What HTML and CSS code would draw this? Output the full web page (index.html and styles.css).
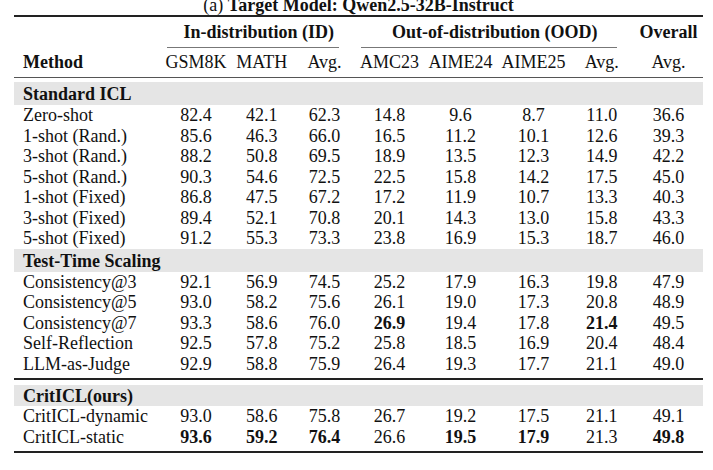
FILE: index.html
```html
<!DOCTYPE html>
<html lang="en">
  <head>
    <meta charset="UTF-8" />
    <meta name="viewport" content="width=device-width, initial-scale=1.0" />
    <title>CritICL Results - Qwen2.5-32B-Instruct</title>
    <link rel="stylesheet" href="styles.css">
  </head>
  <body>
    <main class="page">
      <div class="caption">(a) <b>Target Model: Qwen2.5-32B-Instruct</b></div>
      <table class="results">
        <colgroup>
          <col class="c-method">
          <col class="c-gsm">
          <col class="c-math">
          <col class="c-avg-id">
          <col class="c-amc">
          <col class="c-aime24">
          <col class="c-aime25">
          <col class="c-avg-ood">
          <col class="c-overall">
        </colgroup>
        <thead>
          <tr class="group-row">
            <th></th>
            <th colspan="3"><div class="cmid">In-distribution (ID)</div></th>
            <th colspan="4"><div class="cmid">Out-of-distribution (OOD)</div></th>
            <th><div class="nocmid">Overall</div></th>
          </tr>
          <tr class="sub-row">
            <th class="method">Method</th>
            <th>GSM8K</th>
            <th>MATH</th>
            <th>Avg.</th>
            <th>AMC23</th>
            <th>AIME24</th>
            <th>AIME25</th>
            <th>Avg.</th>
            <th>Avg.</th>
          </tr>
        </thead>
        <tbody>
          <tr class="gap"><td colspan="9"></td></tr>
          <tr class="section"><td colspan="9">Standard ICL</td></tr>
          <tr><td>Zero-shot</td><td>82.4</td><td>42.1</td><td>62.3</td><td>14.8</td><td>9.6</td><td>8.7</td><td>11.0</td><td>36.6</td></tr>
          <tr><td>1-shot (Rand.)</td><td>85.6</td><td>46.3</td><td>66.0</td><td>16.5</td><td>11.2</td><td>10.1</td><td>12.6</td><td>39.3</td></tr>
          <tr><td>3-shot (Rand.)</td><td>88.2</td><td>50.8</td><td>69.5</td><td>18.9</td><td>13.5</td><td>12.3</td><td>14.9</td><td>42.2</td></tr>
          <tr><td>5-shot (Rand.)</td><td>90.3</td><td>54.6</td><td>72.5</td><td>22.5</td><td>15.8</td><td>14.2</td><td>17.5</td><td>45.0</td></tr>
          <tr><td>1-shot (Fixed)</td><td>86.8</td><td>47.5</td><td>67.2</td><td>17.2</td><td>11.9</td><td>10.7</td><td>13.3</td><td>40.3</td></tr>
          <tr><td>3-shot (Fixed)</td><td>89.4</td><td>52.1</td><td>70.8</td><td>20.1</td><td>14.3</td><td>13.0</td><td>15.8</td><td>43.3</td></tr>
          <tr><td>5-shot (Fixed)</td><td>91.2</td><td>55.3</td><td>73.3</td><td>23.8</td><td>16.9</td><td>15.3</td><td>18.7</td><td>46.0</td></tr>
          <tr class="section"><td colspan="9">Test-Time Scaling</td></tr>
          <tr><td>Consistency@3</td><td>92.1</td><td>56.9</td><td>74.5</td><td>25.2</td><td>17.9</td><td>16.3</td><td>19.8</td><td>47.9</td></tr>
          <tr><td>Consistency@5</td><td>93.0</td><td>58.2</td><td>75.6</td><td>26.1</td><td>19.0</td><td>17.3</td><td>20.8</td><td>48.9</td></tr>
          <tr><td>Consistency@7</td><td>93.3</td><td>58.6</td><td>76.0</td><td class="best">26.9</td><td>19.4</td><td>17.8</td><td class="best">21.4</td><td>49.5</td></tr>
          <tr><td>Self-Reflection</td><td>92.5</td><td>57.8</td><td>75.2</td><td>25.8</td><td>18.5</td><td>16.9</td><td>20.4</td><td>48.4</td></tr>
          <tr><td>LLM-as-Judge</td><td>92.9</td><td>58.8</td><td>75.9</td><td>26.4</td><td>19.3</td><td>17.7</td><td>21.1</td><td>49.0</td></tr>
          <tr class="gap-above"><td colspan="9"></td></tr>
          <tr class="gap-below"><td colspan="9"></td></tr>
          <tr class="section ours"><td colspan="9">CritICL(ours)</td></tr>
          <tr><td>CritICL-dynamic</td><td>93.0</td><td>58.6</td><td>75.8</td><td>26.7</td><td>19.2</td><td>17.5</td><td>21.1</td><td>49.1</td></tr>
          <tr><td>CritICL-static</td><td class="best">93.6</td><td class="best">59.2</td><td class="best">76.4</td><td>26.6</td><td class="best">19.5</td><td class="best">17.9</td><td>21.3</td><td class="best">49.8</td></tr>
          <tr class="gap-end"><td colspan="9"></td></tr>
        </tbody>
      </table>
    </main>
  </body>
</html>
```

FILE: styles.css
```css
* {
  margin: 0;
  padding: 0;
  box-sizing: border-box;
}

body {
  background: #fff;
  color: #111;
  font-family: "Liberation Serif", "Times New Roman", serif;
  font-size: 18px;
}

.page {
  width: 713px;
  padding: 0 10px 0 14px;
}

.caption {
  height: 15px;
  line-height: 10px;
  text-align: center;
}

.results {
  width: 689px;
  table-layout: fixed;
  border-collapse: separate;
  border-spacing: 0;
  border-top: 2px solid #222;
  border-bottom: 2px solid #222;
}

.c-method { width: 148px; }
.c-gsm { width: 68px; }
.c-math { width: 63.5px; }
.c-avg-id { width: 62px; }
.c-amc { width: 68px; }
.c-aime24 { width: 74px; }
.c-aime25 { width: 72px; }
.c-avg-ood { width: 64.5px; }
.c-overall { width: 69px; }

th, td {
  padding: 0;
  text-align: center;
  white-space: nowrap;
  font-weight: normal;
}

/* group headers + cmidrules */
.group-row th {
  padding-top: 7px;
  font-weight: bold;
  line-height: 17px;
}

.cmid {
  margin: 0 17px 0 5px;
  padding: 0 0 6px;
  border-bottom: 1px solid #777;
  text-indent: 12px;
}

.nocmid {
  padding-bottom: 7px;
}

.sub-row th {
  padding: 6px 0 6px;
  line-height: 17px;
  border-bottom: 1px solid #555;
}

.sub-row th.method {
  font-weight: bold;
  text-align: left;
  padding-left: 9px;
}

/* body rows */
tbody td {
  line-height: 20.5px;
}

tbody td:first-child {
  text-align: left;
  padding-left: 9px;
}

.best {
  font-weight: bold;
}

.gap td {
  height: 4px;
  line-height: 0;
}

.section td {
  background: #e5e5e5;
  font-weight: bold;
  line-height: 21px;
  padding-top: 2px;
}

.section.ours td {
  line-height: 19px;
  padding-top: 2px;
}

.gap-above td {
  height: 6px;
  line-height: 0;
  border-bottom: 2px solid #222;
}

.gap-below td {
  height: 5px;
  line-height: 0;
}

.gap-end td {
  height: 4px;
  line-height: 0;
}
```
